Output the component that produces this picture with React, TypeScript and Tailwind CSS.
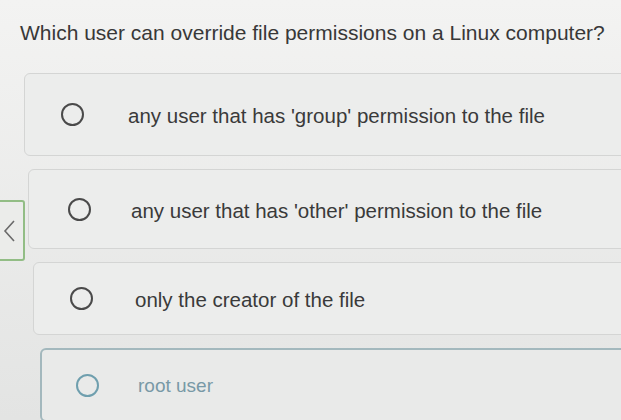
const options = [
  { text: "any user that has 'group' permission to the file", ml: "ml-[24px]", h: "h-[83px]", pad: "pl-[36px]", gap: "gap-[44px]" },
  { text: "any user that has 'other' permission to the file", ml: "ml-[28px]", h: "h-[80px]", pad: "pl-[39px]", gap: "gap-[40px]" },
  { text: "only the creator of the file", ml: "ml-[33px]", h: "h-[73px]", pad: "pl-[36px]", gap: "gap-[42px]" },
];

function Radio({ teal }: { teal?: boolean }) {
  return (
    <span
      className={
        "block h-[23px] w-[23px] shrink-0 rounded-full border-[2.5px] " +
        (teal ? "border-[#6f9fae]" : "border-[#4a4a4a]")
      }
    />
  );
}

export default function App() {
  return (
    <div
      className="relative h-[420px] w-[621px] overflow-hidden bg-gradient-to-b from-[#f3f3f2] to-[#e3e4e3] text-[#3a3a3a]"
      style={{ fontFamily: '"Liberation Sans", Arial, sans-serif' }}
    >
      <h1 className="pl-[20px] pt-[20px] text-[21px] leading-[25px] text-[#383838]">
        Which user can override file permissions on a Linux computer?
      </h1>

      <div className="mt-[28px] flex flex-col gap-[13px]">
        {options.map((o) => (
          <div
            key={o.text}
            className={`${o.ml} ${o.h} ${o.pad} ${o.gap} mr-[-20px] flex items-center rounded-[6px] border border-[#d4d5d4] bg-[#ecedec]`}
          >
            <Radio />
            <span className="mt-[4px] text-[20.5px] text-[#3a3a3a]">{o.text}</span>
          </div>
        ))}
        <div className="ml-[40px] mr-[-20px] flex h-[74px] items-center gap-[39px] rounded-[6px] border-2 border-[#a3b8bd] bg-[#e9eae9] pl-[34px]">
          <Radio teal />
          <span className="mt-[3px] text-[19px] text-[#7899a6]">root user</span>
        </div>
      </div>

      <button className="absolute left-[-8px] top-[200px] flex h-[61px] w-[33px] items-center justify-end rounded-[3px] border-2 border-[#92bd85] bg-[#ebecea] pr-[8px]">
        <svg width="12" height="22" viewBox="0 0 12 22" fill="none">
          <path d="M11 1 L2 11 L11 21" stroke="#6a6a6a" strokeWidth="1.6" />
        </svg>
      </button>
    </div>
  );
}
